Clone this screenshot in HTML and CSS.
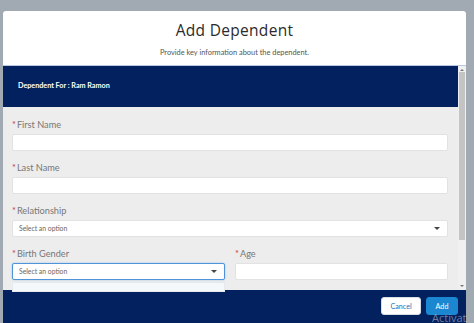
FILE: index.html
```html
<!DOCTYPE html>
<html lang="en">
<head>
    <meta charset="UTF-8">
    <title>Add Dependent</title>
    <link rel="stylesheet" href="styles.css">
</head>
<body>
    <div class="modal">
        <div class="modal-header">
            <h2>Add Dependent</h2>
            <p>Provide key information about the dependent.</p>
        </div>

        <div class="modal-scroll">
            <div class="modal-content">
                <div class="dependent-for">Dependent For : Ram Ramon</div>
                <form class="form">
                    <div class="field">
                        <label><span class="req">*</span>First Name</label>
                        <div class="input"></div>
                    </div>
                    <div class="field">
                        <label><span class="req">*</span>Last Name</label>
                        <div class="input"></div>
                    </div>
                    <div class="field">
                        <label><span class="req">*</span>Relationship</label>
                        <div class="input select">Select an option<span class="caret"></span></div>
                    </div>
                    <div class="field-row">
                        <div class="field">
                            <label><span class="req">*</span>Birth Gender</label>
                            <div class="input select focused">Select an option<span class="caret"></span></div>
                            <div class="dropdown-peek"></div>
                        </div>
                        <div class="field">
                            <label><span class="req">*</span>Age</label>
                            <div class="input"></div>
                        </div>
                    </div>
                </form>
            </div>
            <div class="scrollbar">
                <span class="arrow up"></span>
                <div class="track"><div class="thumb"></div></div>
                <span class="arrow down"></span>
            </div>
        </div>

        <div class="modal-footer">
            <button class="btn btn-cancel">Cancel</button>
            <button class="btn btn-add">Add</button>
        </div>
    </div>
    <div class="watermark">Activat</div>
</body>
</html>
```

FILE: styles.css
```css
/* General */
* {
    margin: 0;
    padding: 0;
    box-sizing: border-box;
}

body {
    background: #a1a9b3;
    font-family: 'Lato', sans-serif;
    height: 323px;
    overflow: hidden;
    position: relative;
}

/* Modal */
.modal {
    margin: 11px 0 0 3px;
    width: 463px;
    display: flex;
    flex-direction: column;
}

.modal-header {
    background: #fff;
    height: 54px;
    text-align: center;
    padding-top: 10px;
    border-radius: 3px 3px 0 0;
}

.modal-header h2 {
    font-family: 'Open Sans', sans-serif;
    font-weight: 500;
    font-size: 15.5px;
    line-height: 18px;
    color: #2b2b2b;
    letter-spacing: 0.3px;
}

.modal-header p {
    font-size: 7.4px;
    color: #555;
    margin-top: 9px;
}

.modal-scroll {
    display: flex;
    height: 225px;
    border-top: 1px solid #b9c8de;
}

.modal-content {
    flex: 1;
    background: #ededed;
}

.dependent-for {
    background: #03215f;
    color: #fff;
    height: 41px;
    padding-left: 15px;
    font-size: 7.2px;
    font-weight: 700;
    line-height: 39px;
}

/* Form */
.form {
    padding: 11px 10px 0 9px;
}

.field {
    margin-bottom: 10px;
    position: relative;
}

.field label {
    display: block;
    font-size: 9.2px;
    line-height: 14px;
    color: #777;
    margin-bottom: 2px;
}

.req {
    color: #c23934;
    margin-right: 1px;
}

.input {
    height: 17px;
    background: #fff;
    border: 1px solid #e2e2e2;
    border-radius: 2px;
}

.select {
    font-size: 6.8px;
    color: #666;
    line-height: 15px;
    padding-left: 6px;
    position: relative;
}

.select.focused {
    border-color: #4f93d8;
    box-shadow: 0 0 2px #9cc3ea;
}

.caret {
    position: absolute;
    right: 7px;
    top: 6px;
    border-left: 3px solid transparent;
    border-right: 3px solid transparent;
    border-top: 3px solid #444;
}

.field-row {
    display: grid;
    grid-template-columns: 1fr 1fr;
    gap: 10px;
}

.dropdown-peek {
    position: absolute;
    left: 0;
    right: 0;
    top: 35px;
    height: 10px;
    background: #f5f8fa;
    border: 1px solid #e6eaef;
}

/* Scrollbar */
.scrollbar {
    width: 8px;
    background: #f0f0f0;
    display: flex;
    flex-direction: column;
    align-items: center;
}

.arrow {
    height: 8px;
    width: 8px;
    position: relative;
}

.arrow::after {
    content: "";
    position: absolute;
    left: 2px;
    border-left: 2px solid transparent;
    border-right: 2px solid transparent;
}

.arrow.up::after {
    top: 3px;
    border-bottom: 2px solid #777;
}

.arrow.down::after {
    top: 3px;
    border-top: 2px solid #777;
}

.track {
    flex: 1;
    width: 100%;
    padding: 0 1px;
}

.thumb {
    margin-top: -2px;
    height: 168px;
    background: #c4c4c4;
}

/* Footer */
.modal-footer {
    background: #03215f;
    height: 33px;
    display: flex;
    justify-content: flex-end;
    gap: 5px;
    padding: 7px 8px 0 0;
}

.btn {
    height: 18px;
    border-radius: 3px;
    font-family: 'Lato', sans-serif;
    font-size: 7.2px;
    cursor: pointer;
}

.btn-cancel {
    width: 40px;
    background: #fff;
    border: 1px solid #d8dde6;
    color: #1f6fb6;
}

.btn-add {
    width: 32px;
    background: #1b87d0;
    border: 1px solid #1b87d0;
    color: #fff;
}

.watermark {
    position: absolute;
    left: 432px;
    top: 310px;
    font-family: 'Open Sans', sans-serif;
    font-size: 11px;
    color: rgba(200, 206, 216, 0.55);
    pointer-events: none;
}
```
